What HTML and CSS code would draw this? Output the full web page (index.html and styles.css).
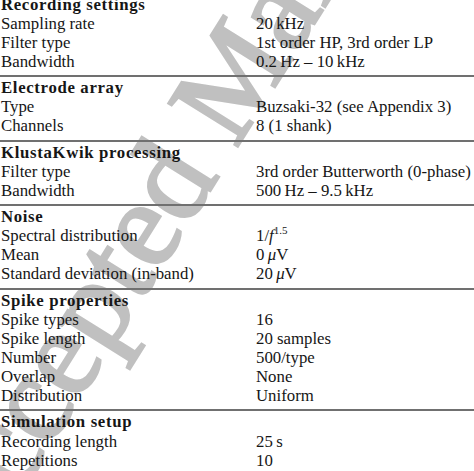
FILE: index.html
```html
<!DOCTYPE html>
<html>
<head>
<meta charset="utf-8">
<link rel="stylesheet" href="styles.css">
</head>
<body>
<div class="wm">Accepted Manuscript</div>
<div class="table">
  <section class="sec">
    <div class="head">Recording settings</div>
    <div class="k">Sampling rate</div><div class="v">20&thinsp;kHz</div>
    <div class="k">Filter type</div><div class="v">1st order HP, 3rd order LP</div>
    <div class="k">Bandwidth</div><div class="v">0.2&thinsp;Hz – 10&thinsp;kHz</div>
  </section>
  <section class="sec">
    <div class="head">Electrode array</div>
    <div class="k">Type</div><div class="v">Buzsaki-32 (see Appendix 3)</div>
    <div class="k">Channels</div><div class="v">8 (1 shank)</div>
  </section>
  <section class="sec">
    <div class="head">KlustaKwik processing</div>
    <div class="k">Filter type</div><div class="v">3rd order Butterworth (0-phase)</div>
    <div class="k">Bandwidth</div><div class="v">500&thinsp;Hz – 9.5&thinsp;kHz</div>
  </section>
  <section class="sec">
    <div class="head">Noise</div>
    <div class="k">Spectral distribution</div><div class="v">1/<i>f</i><sup class="sup">1.5</sup></div>
    <div class="k">Mean</div><div class="v">0&thinsp;<i>μ</i>V</div>
    <div class="k">Standard deviation (in-band)</div><div class="v">20&thinsp;<i>μ</i>V</div>
  </section>
  <section class="sec">
    <div class="head">Spike properties</div>
    <div class="k">Spike types</div><div class="v">16</div>
    <div class="k">Spike length</div><div class="v">20 samples</div>
    <div class="k">Number</div><div class="v">500/type</div>
    <div class="k">Overlap</div><div class="v">None</div>
    <div class="k">Distribution</div><div class="v">Uniform</div>
  </section>
  <section class="sec last">
    <div class="head">Simulation setup</div>
    <div class="k">Recording length</div><div class="v">25&thinsp;s</div>
    <div class="k">Repetitions</div><div class="v">10</div>
  </section>
</div>
</body>
</html>
```
FILE: styles.css
```css
html, body {
  margin: 0;
  padding: 0;
  overflow: hidden;
  background: #fff;
}
body {
  position: relative;
  width: 474px;
  height: 471px;
  font-family: "Liberation Serif", "Times New Roman", serif;
  color: #161616;
}
.wm {
  position: absolute;
  left: -116px;
  top: 518px;
  font-family: "Liberation Serif", serif;
  font-size: 124px;
  line-height: 1;
  white-space: nowrap;
  color: #c0c0c0;
  -webkit-text-stroke: 3px #c0c0c0;
  transform-origin: 0 0;
  transform: rotate(-58deg);
  z-index: 0;
}
.table {
  position: relative;
  z-index: 1;
  margin-top: -6.4px;
  font-size: 16.8px;
  line-height: 19.1px;
}
.sec {
  display: grid;
  grid-template-columns: 255px 1fr;
  padding: 1px 0 4.2px 1px;
  border-bottom: 2px solid #707070;
}
.sec.last {
  border-bottom: none;
}
.head {
  grid-column: 1 / 3;
  font-weight: bold;
  letter-spacing: 0.65px;
}
.k, .v {
  white-space: nowrap;
}
.sup {
  font-size: 11px;
  line-height: 0;
  vertical-align: 7px;
}
i {
  font-style: italic;
}
```
